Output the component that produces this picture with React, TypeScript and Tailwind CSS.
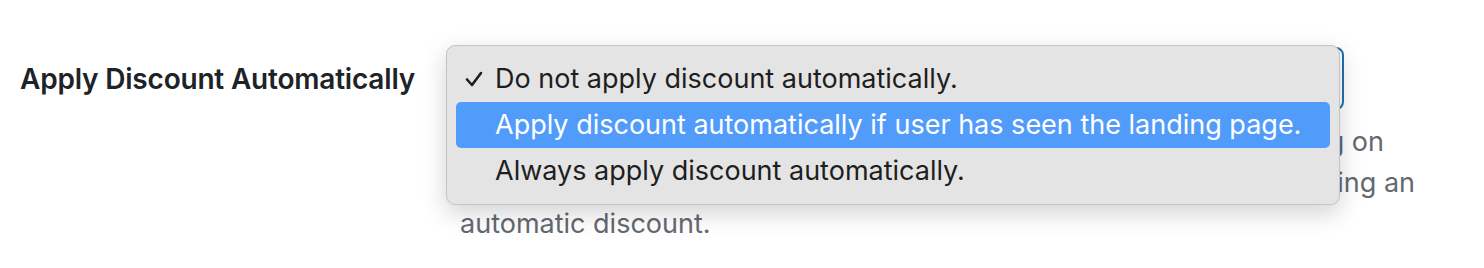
const options = [
  "Do not apply discount automatically.",
  "Apply discount automatically if user has seen the landing page.",
  "Always apply discount automatically.",
];

const helpLines = [
  "Choose whether to apply the discount code automatically, depending on",
  "whether the customer has seen your landing page, rather than requiring an",
  "automatic discount.",
];

export default function App() {
  const selected = 0;
  const highlighted = 1;
  return (
    <div className="h-[268px] w-[1484px] bg-white font-['Inter',sans-serif]">
      <div className="flex items-start pl-5 pt-[47px]">
        <div className="flex h-[63px] w-[440px] items-center">
          <span className="text-[28px] font-semibold tracking-[-0.2px] text-[#1d2327]">
            Apply Discount Automatically
          </span>
        </div>
        <div className="w-[884px]">
          <div className="relative">
            <div className="h-[63px] rounded-lg border-2 border-[#2271b1] bg-white" />
            <div className="absolute left-[-14px] top-[-2px] w-[894px] rounded-[9px] border border-[#c4c4c4] bg-[#e4e4e4] px-[9px] py-[10px] shadow-[0_8px_24px_rgba(0,0,0,0.18)]">
              {options.map((o, i) => (
                <div
                  key={o}
                  className={`flex h-[46px] items-center rounded-[5px] text-[27px] ${
                    i === highlighted ? "bg-[#519cfb] text-white" : "text-[#1e1e1e]"
                  }`}
                >
                  <span className="flex w-[39px] justify-start pl-[9px]">
                    {i === selected && (
                      <svg width="18" height="18" viewBox="0 0 18 18" fill="none">
                        <path
                          d="M2 9.5 L7 15 L16 3"
                          stroke="currentColor"
                          strokeWidth="2.6"
                          strokeLinecap="round"
                          strokeLinejoin="round"
                        />
                      </svg>
                    )}
                  </span>
                  <span className="whitespace-nowrap">{o}</span>
                </div>
              ))}
            </div>
          </div>
          <p className="mt-[11px] text-[27px] leading-[41px] text-[#646970]">
            {helpLines.map((l) => (
              <span key={l} className="block whitespace-nowrap">
                {l}
              </span>
            ))}
          </p>
        </div>
      </div>
    </div>
  );
}
